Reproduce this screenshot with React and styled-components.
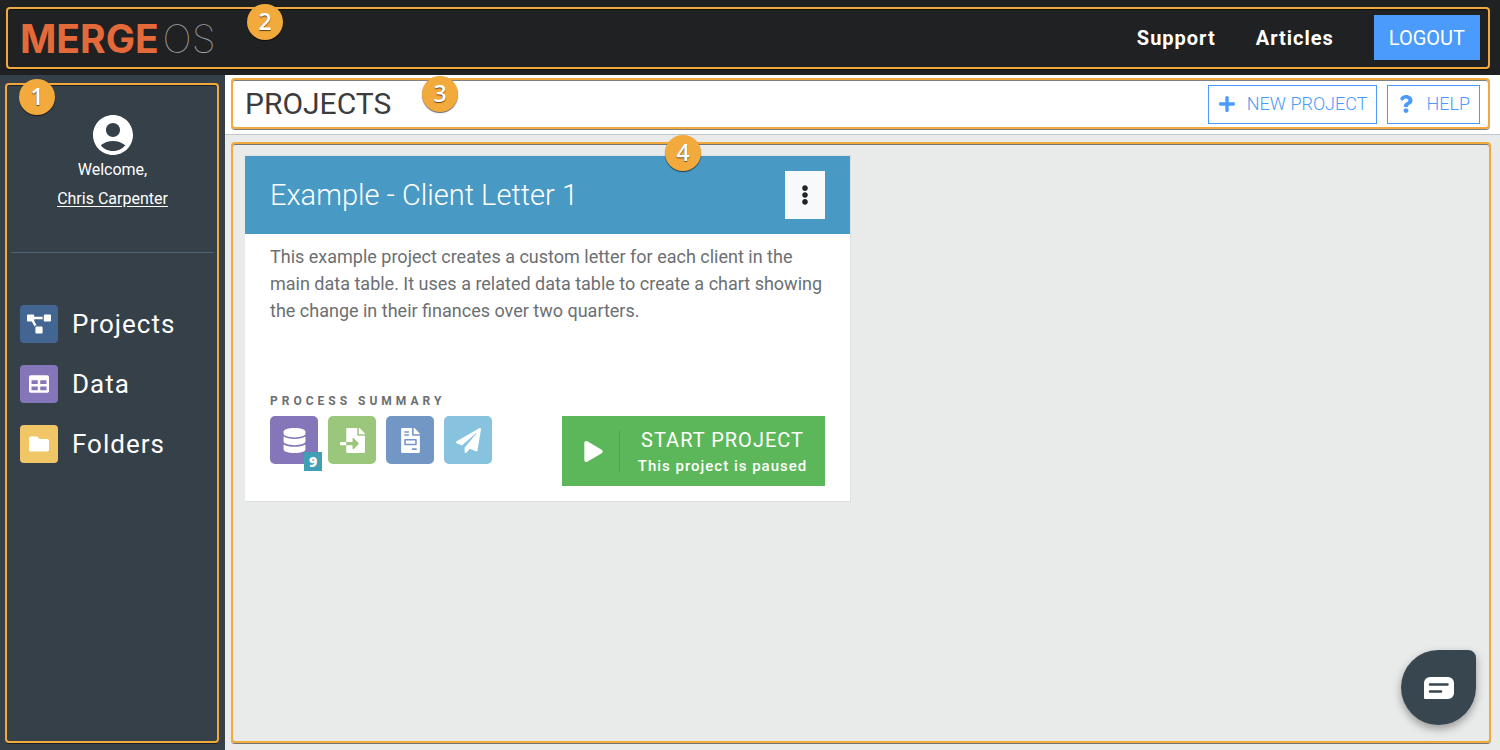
import React from 'react'
import styled, { createGlobalStyle } from 'styled-components';
import {
  FaProjectDiagram,
  FaTable,
  FaFolder,
  FaDatabase,
  FaFileImport,
  FaFileInvoice,
  FaPaperPlane,
  FaPlay,
  FaPlus,
  FaQuestion,
  FaEllipsisV,
} from 'react-icons/fa';
import { MdAccountCircle } from 'react-icons/md';

const GlobalStyle = createGlobalStyle`
* {
  box-sizing: border-box;
}
body {
  margin: 0;
  background: #e9ebea;
  font-family: Roboto, "Liberation Sans", sans-serif;
}
button {
  font-family: inherit;
  border: 0;
  cursor: pointer;
}
`

const Page = styled.div`
display: flex;
flex-direction: column;
min-height: 100vh;
`

const Header = styled.header`
position: relative;
display: flex;
align-items: center;
height: 75px;
padding: 0 20px;
background: #202123;
`

const Logo = styled.a`
display: flex;
align-items: center;
margin-right: auto;
padding-top: 3px;
font-family: Inter, sans-serif;
font-size: 39px;
font-weight: 700;
line-height: 48px;
color: #e56a3a;
text-decoration: none;
`

const LogoThin = styled.span`
margin-left: 4px;
font-weight: 100;
color: #a0a1a3;
`

const TopNav = styled.nav`
display: flex;
align-items: center;
gap: 40px;
`

const TopLink = styled.a`
font-size: 20px;
font-weight: 700;
letter-spacing: 1px;
color: #fff;
text-decoration: none;
`

const LogoutButton = styled.button`
height: 45px;
padding: 0 15px;
background: #4a9bfb;
color: #fff;
font-size: 20px;
`

const Body = styled.div`
display: flex;
flex: 1;
`

const Sidebar = styled.aside`
position: relative;
flex: 0 0 225px;
background: #364048;
`

const User = styled.div`
display: flex;
flex-direction: column;
align-items: center;
margin: 0 11px;
padding: 36px 0 39px;
border-bottom: 1px solid #4f6271;
color: #fff;
font-size: 16px;
line-height: 29px;

svg {
  margin-bottom: -4px;
}
`

const UserLink = styled.a`
color: #fff;
text-underline-offset: 2px;
`

const SideNav = styled.nav`
display: flex;
flex-direction: column;
gap: 22px;
padding: 52px 20px;
`

const SideLink = styled.a`
display: flex;
align-items: center;
gap: 14px;
color: #fff;
font-size: 26px;
letter-spacing: 1px;
line-height: 38px;
text-decoration: none;
`

const SideIcon = styled.span`
display: flex;
align-items: center;
justify-content: center;
width: 38px;
height: 38px;
border-radius: 4px;
background: ${(props) => props.$color};
`

const Main = styled.main`
display: flex;
flex: 1;
flex-direction: column;
min-width: 0;
`

const TitleBar = styled.div`
position: relative;
display: flex;
align-items: center;
gap: 10px;
height: 60px;
padding: 0 20px;
border-bottom: 1px solid #c3c7c7;
background: #fff;
`

const Title = styled.h1`
margin: 0 auto 2px 0;
color: #3c3c3e;
font-size: 30px;
font-weight: 400;
line-height: 36px;
`

const OutlineButton = styled.button`
display: flex;
align-items: center;
gap: 11px;
height: 39px;
padding: 0 9px 2px 9px;
border: 1px solid #4a9bfb;
background: #fff;
color: #4a9bfb;
font-size: 18px;
font-weight: 300;
`

const Content = styled.section`
position: relative;
flex: 1;
padding: 20px;
`

const Card = styled.article`
width: 606px;
max-width: 100%;
border: 1px solid #dcdfdf;
border-left-width: 0;
background: #fff;
`

const CardHeader = styled.div`
display: flex;
align-items: center;
justify-content: space-between;
height: 78px;
padding: 0 25px;
background: #4899c3;
`

const CardTitle = styled.h2`
margin: 0;
color: #fff;
font-size: 29px;
font-weight: 300;
`

const MenuButton = styled.button`
display: flex;
align-items: center;
justify-content: center;
width: 40px;
height: 48px;
background: #f8f9fa;
color: #212529;
`

const CardBody = styled.div`
padding: 9px 25px 15px;
`

const Description = styled.p`
margin: 0;
min-height: 150px;
color: #6c6f72;
font-size: 18px;
line-height: 27px;
`

const CardFooter = styled.div`
display: flex;
align-items: flex-end;
justify-content: space-between;
`

const Summary = styled.div`
padding-bottom: 22px;
`

const SummaryTitle = styled.h3`
margin: 0 0 7px;
color: #6c6f72;
font-size: 12px;
font-weight: 700;
letter-spacing: 4px;
line-height: 16px;
`

const Steps = styled.div`
display: flex;
gap: 10px;
`

const Step = styled.span`
position: relative;
display: flex;
align-items: center;
justify-content: center;
width: 48px;
height: 48px;
border-radius: 5px;
background: ${(props) => props.$color};
color: #fff;
`

const StepCount = styled.span`
position: absolute;
right: -4px;
bottom: -7px;
width: 18px;
background: #409fb5;
font-family: "Open Sans", sans-serif;
font-size: 14px;
font-weight: 800;
line-height: 19px;
text-align: center;
`

const StartButton = styled.button`
display: flex;
align-items: center;
height: 70px;
padding: 0 15px 0 21px;
background: #5cb75a;
color: #fff;
`

const StartIcon = styled.span`
display: flex;
align-items: center;
height: 42px;
margin-right: 15px;
padding-right: 15px;
border-right: 1px solid #4fa44f;
`

const StartText = styled.span`
display: flex;
flex-direction: column;
min-width: 175px;
padding-top: 3px;
font-size: 20px;
letter-spacing: 1px;
line-height: 26px;
`

const StartNote = styled.span`
font-size: 15px;
font-weight: 500;
`

const ChatButton = styled.button`
position: fixed;
right: 24px;
bottom: 25px;
z-index: 3;
display: flex;
align-items: center;
justify-content: center;
width: 75px;
height: 75px;
padding: 0;
border-radius: 38px 8px 38px 38px;
background: #384650;
box-shadow: 0 4px 8px rgba(0, 0, 0, 0.35);
`

// numbered outline drawn over a region of the page
const Outline = styled.div`
position: absolute;
inset: ${(props) => props.$inset};
z-index: 2;
border: 2px solid #f3aa3c;
border-radius: 4px;
box-shadow: 0 1px 0 rgba(0, 0, 0, 0.5), inset 0 1px 0 rgba(0, 0, 0, 0.5);
pointer-events: none;
`

const Marker = styled.span`
position: absolute;
left: ${(props) => props.$left};
top: ${(props) => props.$top};
width: 36px;
height: 36px;
border-radius: 50%;
background: #f3aa3c;
box-shadow: 0 1px 1px rgba(0, 0, 0, 0.6);
color: #fff;
font-family: "Open Sans", sans-serif;
font-size: 23px;
font-weight: 600;
line-height: 35px;
text-align: center;
text-shadow: 0 1px 1px rgba(0, 0, 0, 0.6);
`

function Callout({ number, inset, left, top }) {
  return (
    <Outline $inset={inset}>
      <Marker $left={left} $top={top}>{number}</Marker>
    </Outline>
  )
}

const links = [
  { label: 'Projects', color: '#436592', icon: <FaProjectDiagram size={24} /> },
  { label: 'Data', color: '#8476b8', icon: <FaTable size={20} /> },
  { label: 'Folders', color: '#f1c666', icon: <FaFolder size={20} /> },
]

export default function App() {
  return (
    <Page>
      <GlobalStyle />
      <Header>
        <Logo href="#">MERGE<LogoThin>OS</LogoThin></Logo>
        <TopNav>
          <TopLink href="#support">Support</TopLink>
          <TopLink href="#articles">Articles</TopLink>
          <LogoutButton>LOGOUT</LogoutButton>
        </TopNav>
        <Callout number={2} inset="7px 10px 6px 6px" left="239px" top="-5px" />
      </Header>
      <Body>
        <Sidebar>
          <User>
            <MdAccountCircle size={48} />
            <span>Welcome,</span>
            <UserLink href="#account">Chris Carpenter</UserLink>
          </User>
          <SideNav>
            {links.map((link) => (
              <SideLink key={link.label} href={`#${link.label.toLowerCase()}`}>
                <SideIcon $color={link.color}>{link.icon}</SideIcon>
                {link.label}
              </SideLink>
            ))}
          </SideNav>
          <Callout number={1} inset="8px 6px 7px 5px" left="12px" top="-6px" />
        </Sidebar>
        <Main>
          <TitleBar>
            <Title>PROJECTS</Title>
            <OutlineButton><FaPlus size={18} />NEW PROJECT</OutlineButton>
            <OutlineButton><FaQuestion size={18} />HELP</OutlineButton>
            <Callout number={3} inset="3px 10px 5px 6px" left="189px" top="-4px" />
          </TitleBar>
          <Content>
            <Card>
              <CardHeader>
                <CardTitle>Example - Client Letter 1</CardTitle>
                <MenuButton aria-label="Project menu"><FaEllipsisV size={20} /></MenuButton>
              </CardHeader>
              <CardBody>
                <Description>
                  This example project creates a custom letter for each client in the main data table. It uses a related data table to create a chart showing the change in their finances over two quarters.
                </Description>
                <CardFooter>
                  <Summary>
                    <SummaryTitle>PROCESS SUMMARY</SummaryTitle>
                    <Steps>
                      <Step $color="#8476b8"><FaDatabase size={25} /><StepCount>9</StepCount></Step>
                      <Step $color="#9bc77d"><FaFileImport size={25} /></Step>
                      <Step $color="#7297c4"><FaFileInvoice size={25} /></Step>
                      <Step $color="#87c3df"><FaPaperPlane size={25} /></Step>
                    </Steps>
                  </Summary>
                  <StartButton>
                    <StartIcon><FaPlay size={21} /></StartIcon>
                    <StartText>
                      START PROJECT
                      <StartNote>This project is paused</StartNote>
                    </StartText>
                  </StartButton>
                </CardFooter>
              </CardBody>
            </Card>
            <Callout number={4} inset="7px 9px 7px 6px" left="432px" top="-9px" />
          </Content>
        </Main>
      </Body>
      <ChatButton aria-label="Open chat">
        <svg width="30" height="22" viewBox="0 0 30 22">
          <path d="M6 0H24A6 6 0 0 1 30 6V16A6 6 0 0 1 24 22H1A1 1 0 0 1 0 21V6A6 6 0 0 1 6 0Z" fill="#fff" />
          <path d="M6 7.500H23.500M6 14.500H17" stroke="#384650" strokeWidth="2.500" strokeLinecap="round" />
        </svg>
      </ChatButton>
    </Page>
  )
}
